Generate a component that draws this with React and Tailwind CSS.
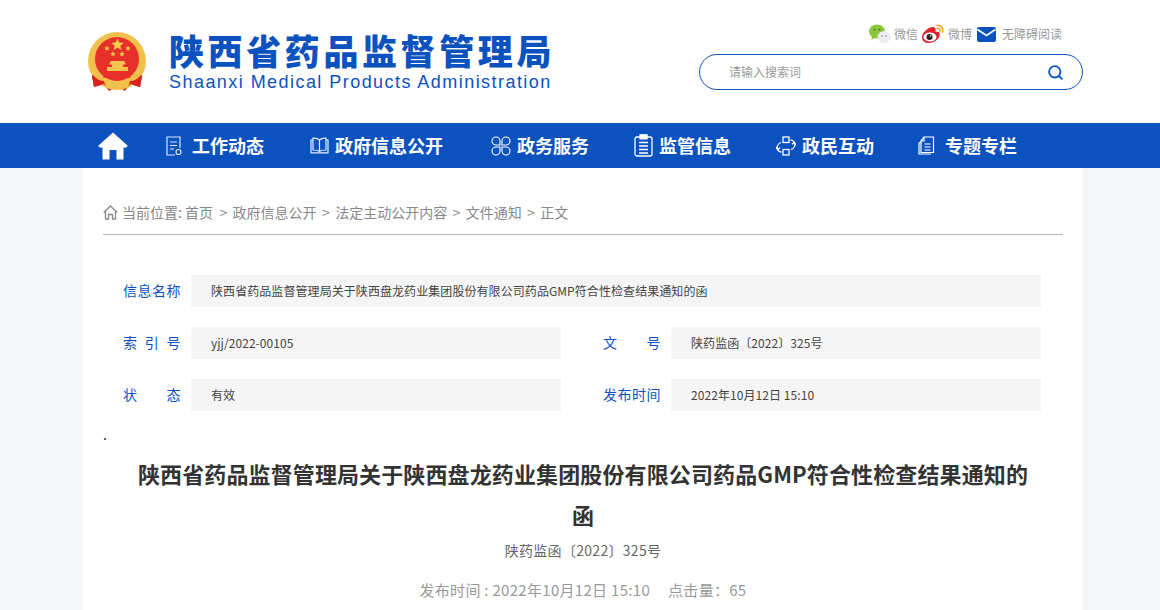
import React from 'react';
import { Search } from 'lucide-react';

const cjk = "font-['Microsoft_YaHei','Noto_Sans_CJK_SC',sans-serif]";

const Emblem = () => (
  <svg width="58" height="60" viewBox="0 0 58 60">
    <path d="M9 41 L4 45 L6 56 L16 53 L21 60 L29 55 L37 60 L42 53 L52 56 L54 45 L49 41 Z" fill="#d8231f" />
    <circle cx="29" cy="30" r="29" fill="#f2c04d" />
    <circle cx="29" cy="28" r="22" fill="#e8302a" />
    <polygon points="29.5,7.5 31.3,11.6 35.7,11.9 32.3,14.8 33.4,19 29.5,16.7 25.6,19 26.7,14.8 23.3,11.9 27.7,11.6" fill="#f8cf4f" />
    <polygon points="19,14.5 19.8,16.4 21.8,16.5 20.2,17.8 20.8,19.8 19,18.7 17.2,19.8 17.8,17.8 16.2,16.5 18.2,16.4" fill="#f8cf4f" />
    <polygon points="40,14.5 40.8,16.4 42.8,16.5 41.2,17.8 41.8,19.8 40,18.7 38.2,19.8 38.8,17.8 37.2,16.5 39.2,16.4" fill="#f8cf4f" />
    <polygon points="25,20 25.8,21.9 27.8,22 26.2,23.3 26.8,25.3 25,24.2 23.2,25.3 23.8,23.3 22.2,22 24.2,21.9" fill="#f8cf4f" />
    <polygon points="34,20 34.8,21.9 36.8,22 35.2,23.3 35.8,25.3 34,24.2 32.2,25.3 32.8,23.3 31.2,22 33.2,21.9" fill="#f8cf4f" />
    <path d="M23 30 H36 L38 33.5 H35 V36 H40 V40 H19 V36 H24 V33.5 H21 Z" fill="#f6c34f" />
    <path d="M17 43 Q23 41 29 45 Q35 41 41 43 L43 47 Q36 45 29 50 Q22 45 15 47 Z" fill="#e8302a" />
    <path d="M5 44 Q10 50 16 50 L18 56 L21 60 L29 55 L37 60 L40 56 L42 50 Q48 50 53 44 L54 45 L52 56 L42 53 L37 60 L29 55 L21 60 L16 53 L6 56 L4 45 Z" fill="#d8231f" />
  </svg>
);

const WeChat = () => (
  <svg width="22" height="20" viewBox="0 0 22 20">
    <ellipse cx="8" cy="7.5" rx="8" ry="7" fill="#8cc63f" />
    <path d="M3 12 L2.5 16 L7 13 Z" fill="#8cc63f" />
    <circle cx="5.5" cy="5.5" r="1" fill="#4a7a1e" />
    <circle cx="10.5" cy="5.5" r="1" fill="#4a7a1e" />
    <ellipse cx="15" cy="13" rx="6.5" ry="6" fill="#ececec" />
    <circle cx="13" cy="12" r="0.8" fill="#8a8a8a" />
    <circle cx="17" cy="12" r="0.8" fill="#8a8a8a" />
  </svg>
);

const Weibo = () => (
  <svg width="24" height="20" viewBox="0 0 24 20">
    <path d="M1 13 C1 8 8 3 12 3 C15 3 15 6 14.5 8 C18 7 19.5 9 18.5 11 C18.5 15 13 19 8 19 C4 19 1 17 1 13 Z" fill="#e0202a" />
    <ellipse cx="9" cy="13" rx="6.5" ry="4.6" fill="#fff" />
    <circle cx="8.5" cy="13" r="3" fill="#222" />
    <circle cx="9.5" cy="12" r="0.8" fill="#fff" />
    <path d="M16 1.2 C20 1 22.5 4 21.6 8" fill="none" stroke="#f29a1f" strokeWidth="1.6" strokeLinecap="round" />
    <path d="M16 4.2 C18 4 19.4 5.4 19 7.4" fill="none" stroke="#f29a1f" strokeWidth="1.4" strokeLinecap="round" />
  </svg>
);

const Mail = () => (
  <svg width="19" height="15" viewBox="0 0 19 15">
    <rect width="19" height="15" rx="2" fill="#0c52bf" />
    <path d="M0.5 2.5 L9.5 8.5 L18.5 2.5" fill="none" stroke="#fff" strokeWidth="1.6" />
  </svg>
);

const HomeIcon = () => (
  <svg width="30" height="28" viewBox="0 0 30 28" fill="#fff">
    <path d="M15 0.5 L30 14 L27 16 L25.5 15 V27.5 H18.5 V18 H11.5 V27.5 H4.5 V15 L3 16 L0 14 Z" strokeLinejoin="round" />
  </svg>
);

const navIcons = {
  news: (
    <svg width="16" height="20" viewBox="0 0 16 20" fill="none" stroke="#dbe6f8" strokeWidth="1.2">
      <path d="M9 19 H1 V1 H14 V12" />
      <path d="M4 6 H11 M4 9.5 H11 M4 13 H8" />
      <circle cx="12.5" cy="16" r="2.5" />
    </svg>
  ),
  book: (
    <svg width="19" height="17" viewBox="0 0 19 17" fill="none" stroke="#e6eefb" strokeWidth="1.2">
      <path d="M9.5 3 C8 1.5 5 1 3 1.2 V13 C5 13 8 13.2 9.5 14.5 C11 13.2 14 13 16 13 V1.2 C14 1 11 1.5 9.5 3 Z M9.5 3 V14.5" />
      <path d="M3 3 H1 V15.8 H18 V3 H16" />
    </svg>
  ),
  grid: (
    <svg width="20" height="20" viewBox="0 0 20 20" fill="none" stroke="#fff" strokeWidth="1.1">
      <path d="M9 9 H5 A4 4 0 1 1 9 5 Z" />
      <path d="M11 9 H15 A4 4 0 1 0 11 5 Z" />
      <path d="M9 11 H5 A4 4 0 1 0 9 15 Z" />
      <path d="M11 11 H15 A4 4 0 1 1 11 15 Z" />
    </svg>
  ),
  clip: (
    <svg width="19" height="23" viewBox="0 0 19 23" fill="none" stroke="#fff" strokeWidth="1.3">
      <rect x="1" y="3" width="17" height="19" rx="2" />
      <rect x="6" y="0.8" width="7" height="4" fill="#fff" />
      <path d="M5 8.5 H14 M5 12 H14 M5 15.5 H14 M5 19 H14" />
    </svg>
  ),
  swap: (
    <svg width="20" height="20" viewBox="0 0 20 20" fill="none" stroke="#fff" strokeWidth="1.3">
      <rect x="7" y="1" width="6" height="5.5" />
      <rect x="7" y="13.5" width="6" height="5.5" />
      <path d="M5 6.5 C2 7.5 0.5 10.5 1.5 13.5 C2.2 15 3.5 16 5.5 16.2" />
      <path d="M0 10.8 L1.6 13.6 L4 11.8" />
      <path d="M15 13.5 C18 12.5 19.5 9.5 18.5 6.5 C17.8 5 16.5 4 14.5 3.8" />
      <path d="M20 9.2 L18.4 6.4 L16 8.2" />
    </svg>
  ),
  doc: (
    <svg width="17" height="19" viewBox="0 0 17 19" fill="none" stroke="#fff" strokeWidth="1.2">
      <path d="M6 1 H15.5 V16.5 H3 V5 Z M6 1 V5 H3" />
      <path d="M3 6 L1 7 V18 H13" />
      <path d="M6.5 8 H12.5 M6.5 11 H12.5 M6.5 14 H12.5" />
    </svg>
  ),
};

const navItems = [
  { label: '工作动态', icon: navIcons.news, cls: 'ml-[38px] gap-[10px]' },
  { label: '政府信息公开', icon: navIcons.book, cls: 'ml-[46px] gap-[6px]' },
  { label: '政务服务', icon: navIcons.grid, cls: 'ml-[48px] gap-[6px]' },
  { label: '监管信息', icon: navIcons.clip, cls: 'ml-[45px] gap-[6px]' },
  { label: '政民互动', icon: navIcons.swap, cls: 'ml-[45px] gap-[6px]' },
  { label: '专题专栏', icon: navIcons.doc, cls: 'ml-[44px] gap-[10px]' },
];

const Field = ({ label, value, wide }) => (
  <div className={`flex items-center ${wide ? 'w-[918px]' : 'w-[438px]'}`}>
    <div className="w-[68px] h-[32px] text-[14px] leading-[30px] tracking-[0.5px] text-[#0c52bf]">{label}</div>
    <div className="flex-1 h-[32px] bg-[#f5f5f5] pl-[20px] text-[12px] tracking-[0.07px] leading-[32px] text-[#444]">{value}</div>
  </div>
);

const Spread = ({ chars }) => (
  <span className="flex justify-between w-[58px]">
    {chars.map((c) => <span key={c}>{c}</span>)}
  </span>
);

const Sep = () => <span className="mx-[5.4px]">&gt;</span>;

export default function App() {
  return (
    <div className={`${cjk} w-[1160px] h-[610px] overflow-hidden bg-[#f5f6f8]`}>
      <header className="h-[123px] bg-white pl-[88px] pr-[77px] flex justify-between">
        <div className="flex items-start pt-[31px]">
          <Emblem />
          <div className="ml-[23px] -mt-[1px]">
            <div className="text-[35px] leading-[40px] font-black tracking-[3.6px] text-[#0c52bf] whitespace-nowrap">陕西省药品监督管理局</div>
            <div className="font-['Liberation_Sans',sans-serif] text-[18px] leading-[20px] mt-[2px] tracking-[1.45px] text-[#0c52bf] whitespace-nowrap">Shaanxi Medical Products Administration</div>
          </div>
        </div>
        <div className="w-[384px] pt-[24px]">
          <div className="flex items-center justify-end pr-[21px] text-[12px] leading-[20px] text-[#999] h-[20px]">
            <WeChat />
            <span className="ml-[3px]">微信</span>
            <span className="ml-[3px]"><Weibo /></span>
            <span className="ml-[3px]">微博</span>
            <span className="ml-[5px]"><Mail /></span>
            <span className="ml-[6px]">无障碍阅读</span>
          </div>
          <div className="mt-[10px] h-[36px] border border-[#0c52bf] rounded-[18px] flex items-center justify-between pl-[29px] pr-[18px] text-[12px] text-[#999]">
            <span>请输入搜索词</span>
            <Search size={17} strokeWidth={2.6} color="#0c52bf" />
          </div>
        </div>
      </header>

      <nav className="h-[45px] bg-[#0c52bf] pl-[98px] flex items-center text-white">
        <HomeIcon />
        {navItems.map((item) => (
          <div key={item.label} className={`flex items-center text-[18px] font-bold whitespace-nowrap ${item.cls}`}>
            {item.icon}
            <span>{item.label}</span>
          </div>
        ))}
      </nav>

      <main className="w-[1000px] ml-[83px] bg-white px-[20px] h-[442px]">
        <div className="pt-[34px] pb-[12px] border-b border-[#b5b5b5] flex items-center text-[14px] leading-[20px] text-[#888]">
          <svg width="15" height="15" viewBox="0 0 15 15" fill="none" stroke="#888" strokeWidth="1.3" className="mr-[4px]">
            <path d="M0.8 7.5 L7.5 1 L14.2 7.5 M2.5 6.5 V14 H5.5 V9.5 H9.5 V14 H12.5 V6.5" />
          </svg>
          <span className="mr-[1px]">当前位置: 首页</span>
          <Sep />
          <span>政府信息公开</span>
          <Sep />
          <span>法定主动公开内容</span>
          <Sep />
          <span>文件通知</span>
          <Sep />
          <span>正文</span>
        </div>

        <div className="pt-[40px] pl-[20px] flex flex-col gap-[20px]">
          <Field wide label="信息名称" value="陕西省药品监督管理局关于陕西盘龙药业集团股份有限公司药品GMP符合性检查结果通知的函" />
          <div className="flex justify-between w-[918px]">
            <Field label={<Spread chars={['索', '引', '号']} />} value="yjj/2022-00105" />
            <Field label={<Spread chars={['文', '号']} />} value="陕药监函〔2022〕325号" />
          </div>
          <div className="flex justify-between w-[918px]">
            <Field label={<Spread chars={['状', '态']} />} value="有效" />
            <Field label="发布时间" value="2022年10月12日 15:10" />
          </div>
        </div>

        <div className="text-[14px] leading-[20px] text-[#333] mt-[13px]">.</div>
        <h1 className="mt-[9px] px-[30px] text-center text-[22px] leading-[41px] font-bold tracking-[0.12px] text-[#333]">
          陕西省药品监督管理局关于陕西盘龙药业集团股份有限公司药品GMP符合性检查结果通知的函
        </h1>
        <div className="mt-[5px] text-center text-[14px] leading-[20px] tracking-[0.3px] text-[#666]">陕药监函〔2022〕325号</div>
        <div className="mt-[19px] text-center text-[15px] leading-[22px] tracking-[0.3px] text-[#999]">发布时间 : 2022年10月12日 15:10<span className="ml-[18px]">点击量：65</span></div>
      </main>
    </div>
  );
}
